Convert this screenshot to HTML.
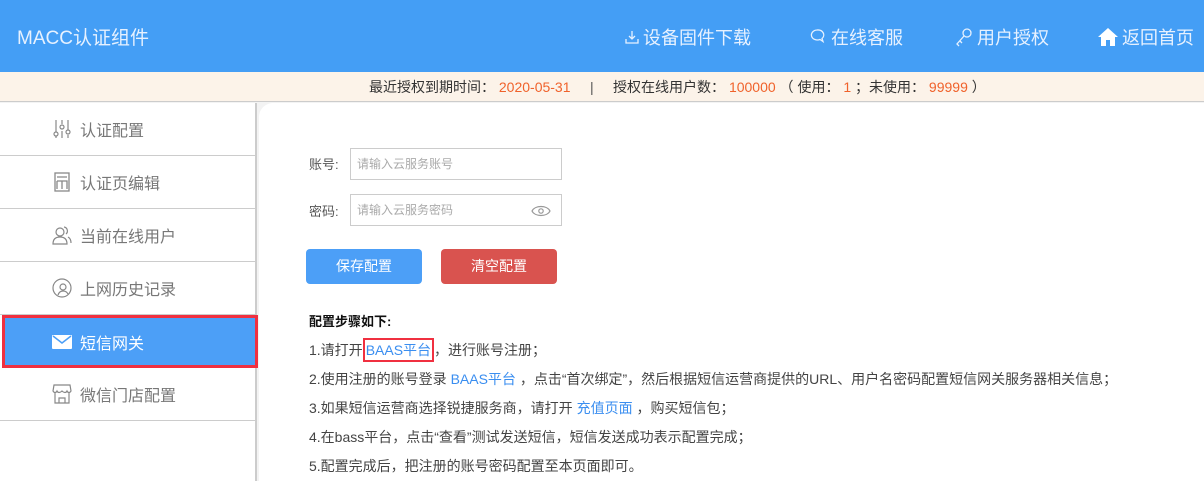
<!DOCTYPE html>
<html><head><meta charset="utf-8"><style>
*{margin:0;padding:0;box-sizing:border-box}
body{width:1204px;height:481px;overflow:hidden;font-family:"Liberation Sans","Noto Sans CJK SC",sans-serif;background:#f3f3f3;position:relative;color:#333}
.hd{position:absolute;left:0;top:0;width:1204px;height:72px;background:#449ef5;color:#e6f1ff}
.logo{position:absolute;left:17px;top:23px;font-size:19px}
.nav{position:absolute;top:24px;font-size:18px;display:flex;align-items:center;gap:3px}
.bn{position:absolute;left:0;top:72px;width:1204px;height:30px;background:#fcf3e9;border-bottom:1px solid #ccc;font-size:14px;color:#333;line-height:30px;padding-left:369px;white-space:nowrap}
.o{color:#f0622b}
.sb{position:absolute;left:0;top:103px;width:257px;height:378px;background:#fff;border-right:2px solid #ccc}
.it{height:53px;border-bottom:1px solid #ccc;display:flex;align-items:center;padding-left:52px;font-size:16px;color:#777}
.it svg{margin-right:8px}
.act{background:#4c9ff7;color:#fff;border:3px solid #f03040;margin-left:2px;padding-left:47px;width:256px}
.ct{position:absolute;left:259px;top:103px;width:945px;height:378px;background:#fff;border-top-left-radius:14px}
.lb{position:absolute;left:50px;font-size:13px;color:#555}
.in{position:absolute;left:91px;width:212px;height:32px;border:1px solid #ccc;font-size:12px;color:#aaa;line-height:30px;padding-left:6px}
.btn{position:absolute;top:146px;width:116px;height:35px;border-radius:4px;color:#fff;font-size:14px;text-align:center;line-height:35px}
.tx{position:absolute;left:50px;top:204px;font-size:14px;line-height:29px;color:#444;white-space:nowrap}
.b{color:#3a8ef0}
</style></head><body>
<div class="hd">
<div class="logo">MACC认证组件</div>
<div class="nav" style="left:624px"><svg width="16" height="16" viewBox="0 0 16 16" fill="none" stroke="#e6f1ff" stroke-width="1.3"><path d="M8 2v8M5 7l3 3 3-3M2 10v4h12v-4"/></svg>设备固件下载</div>
<div class="nav" style="left:808px"><svg width="20" height="18" viewBox="0 0 20 18" fill="none" stroke="#e6f1ff" stroke-width="1.3"><path d="M9 2a6 5 0 1 0 3 9.5l3 2-1-3A6 5 0 0 0 9 2z"/></svg>在线客服</div>
<div class="nav" style="left:954px"><svg width="20" height="20" viewBox="0 0 20 20" fill="none" stroke="#e6f1ff" stroke-width="1.3"><circle cx="13" cy="6" r="4"/><path d="M10 9l-7 8 2 2M6 14l2 2"/></svg>用户授权</div>
<div class="nav" style="left:1097px"><svg width="22" height="20" viewBox="0 0 22 20"><path d="M11 1L1 10h3v9h5v-6h4v6h5v-9h3z" fill="#fff"/></svg>返回首页</div>
</div>
<div class="bn">最近授权到期时间： <span class="o">2020-05-31</span> &nbsp;&nbsp;&nbsp; <span style="color:#555">|</span> &nbsp;&nbsp;&nbsp; 授权在线用户数： <span class="o">100000</span> （ 使用： <span class="o">1</span> ；未使用： <span class="o">99999</span> ）</div>
<div class="sb">
<div class="it"><svg width="20" height="20" viewBox="0 0 20 20" fill="none" stroke="#888" stroke-width="1.2"><path d="M4 1v12M10 1v4M16 1v10M10 12v7M4 17v2M16 16v3"/><circle cx="4" cy="15" r="2"/><circle cx="10" cy="8" r="2"/><circle cx="16" cy="13" r="2"/></svg>认证配置</div>
<div class="it"><svg width="20" height="20" viewBox="0 0 20 20" fill="none" stroke="#888" stroke-width="1.3"><rect x="3" y="1" width="14" height="18"/><path d="M5 5h10M5 9h10v8M10 9v8M5 9v8"/></svg>认证页编辑</div>
<div class="it"><svg width="20" height="20" viewBox="0 0 20 20" fill="none" stroke="#888" stroke-width="1.2"><circle cx="8" cy="7" r="4"/><path d="M1 19c0-5 3-7 7-7s7 2 7 7zM12 2a4 4 0 0 1 2 7M16 12c2 1 3 3 3 6"/></svg>当前在线用户</div>
<div class="it"><svg width="20" height="20" viewBox="0 0 20 20" fill="none" stroke="#888" stroke-width="1.2"><circle cx="10" cy="10" r="9"/><circle cx="11" cy="9" r="3"/><path d="M6 17c1-3 3-4 5-4s4 1 5 3"/></svg>上网历史记录</div>
<div class="it act"><svg width="20" height="16" viewBox="0 0 20 16"><rect x="0" y="1" width="20" height="14" rx="1" fill="#fff"/><path d="M1 2l9 7 9-7" fill="none" stroke="#4c9ff7" stroke-width="1.5"/></svg>短信网关</div>
<div class="it"><svg width="20" height="20" viewBox="0 0 20 20" fill="none" stroke="#888" stroke-width="1.2"><path d="M2 1h16l1 6c-1 2-3 2-4 0-1 2-3 2-5 0-2 2-4 2-5 0-1 2-3 2-4 0zM3 9v10h14V9M7 19v-5h6v5"/></svg>微信门店配置</div>
</div>
<div class="ct">
<div class="lb" style="top:51px">账号:</div>
<div class="in" style="top:45px">请输入云服务账号</div>
<div class="lb" style="top:98px">密码:</div>
<div class="in" style="top:91px">请输入云服务密码<svg style="position:absolute;right:10px;top:10px" width="20" height="12" viewBox="0 0 20 12" fill="none" stroke="#999" stroke-width="1.2"><path d="M1 6c3-6 15-6 18 0-3 6-15 6-18 0z"/><circle cx="10" cy="6" r="2.2"/></svg></div>
<div class="btn" style="left:47px;background:#4c9ff7">保存配置</div>
<div class="btn" style="left:182px;background:#d9534f">清空配置</div>
<div class="tx">
<div style="font-weight:bold;color:#111;font-size:13px">配置步骤如下:</div>
<div>1.请打开<span class="b" style="border:2px solid #f03040;padding:2px 1px">BAAS平台</span>，进行账号注册；</div>
<div>2.使用注册的账号登录 <span class="b">BAAS平台</span> ，点击“首次绑定”，然后根据短信运营商提供的URL、用户名密码配置短信网关服务器相关信息；</div>
<div>3.如果短信运营商选择锐捷服务商，请打开 <span class="b">充值页面</span> ，购买短信包；</div>
<div>4.在bass平台，点击“查看”测试发送短信，短信发送成功表示配置完成；</div>
<div>5.配置完成后，把注册的账号密码配置至本页面即可。</div>
</div>
</div>
</body></html>
